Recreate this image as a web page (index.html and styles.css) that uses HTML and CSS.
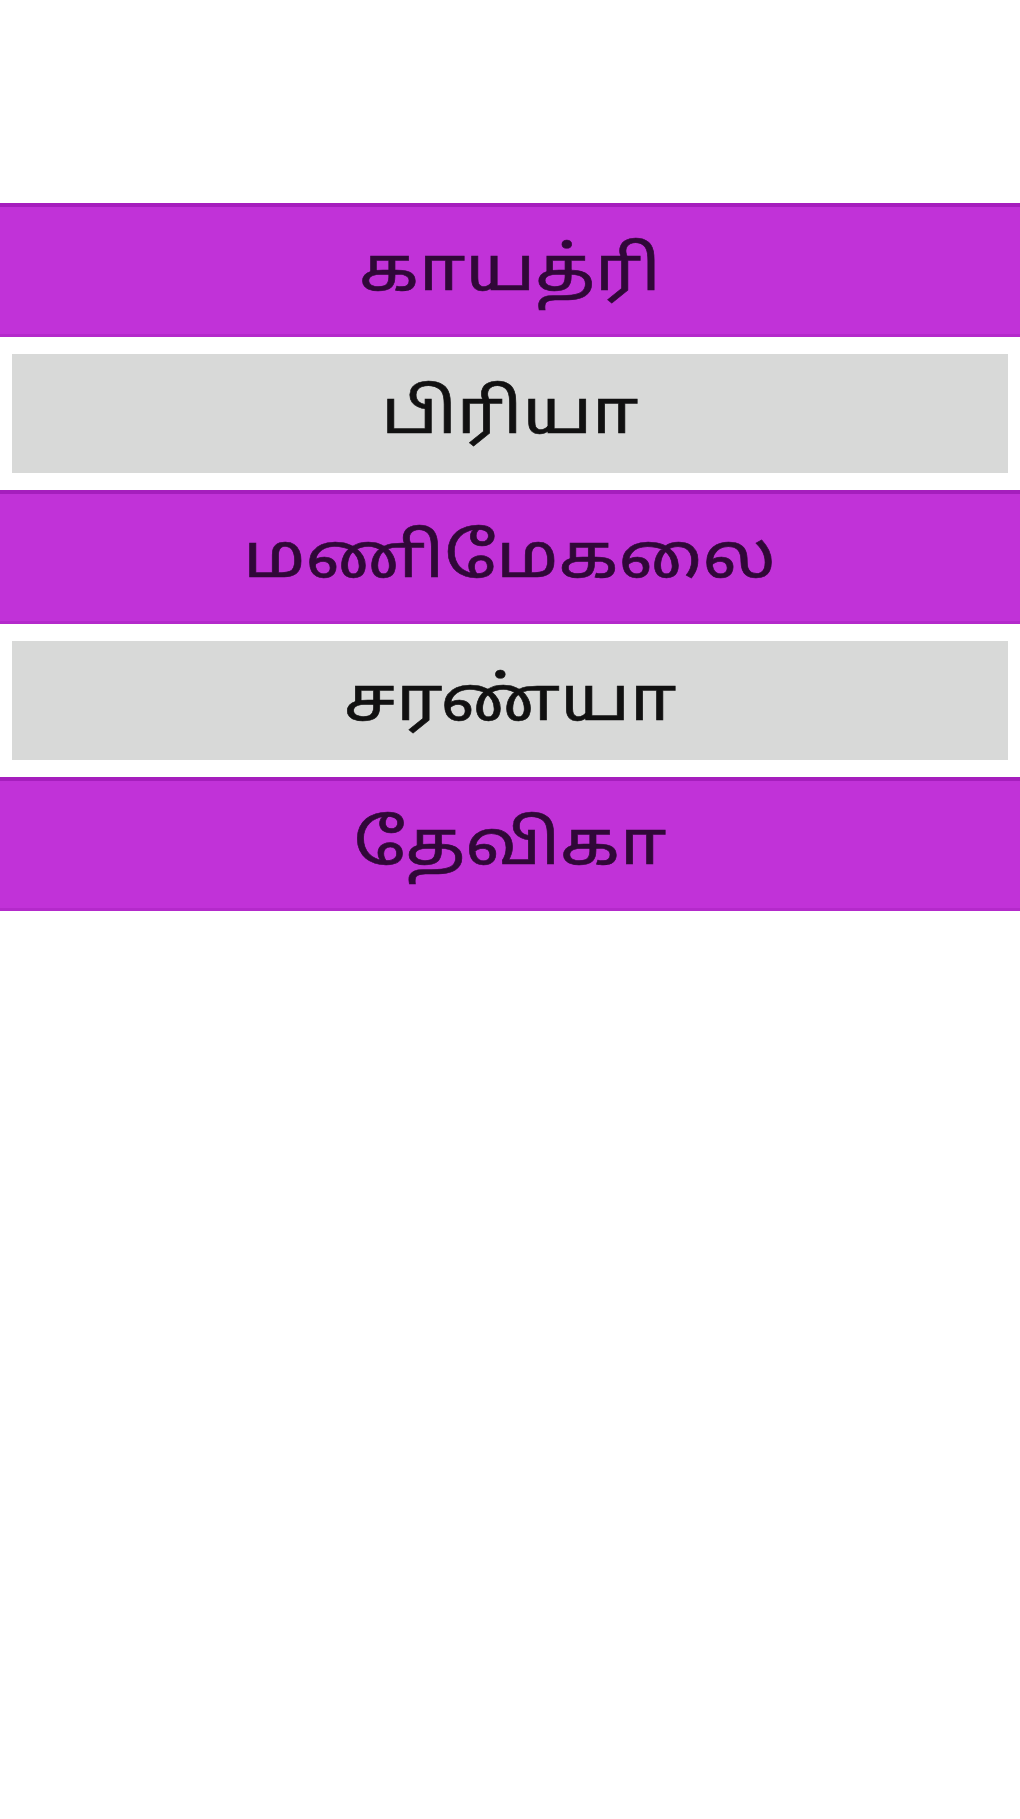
FILE: index.html
```html
<!DOCTYPE html>
<html lang="ta">
<head>
<meta charset="utf-8">
<title>Names</title>
<link rel="stylesheet" href="styles.css">
</head>
<body>
<ul class="list">
  <li class="item item-purple"><span class="label">காயத்ரி</span></li>
  <li class="item item-gray"><span class="label">பிரியா</span></li>
  <li class="item item-purple"><span class="label">மணிமேகலை</span></li>
  <li class="item item-gray"><span class="label">சரண்யா</span></li>
  <li class="item item-purple"><span class="label">தேவிகா</span></li>
</ul>
</body>
</html>
```
FILE: styles.css
```css
html, body {
  margin: 0;
  padding: 0;
  background: #ffffff;
}
body {
  width: 1020px;
  height: 1819px;
  font-family: "Noto Sans Tamil", "Lohit Tamil", "Noto Sans", "DejaVu Sans", sans-serif;
}
.list {
  list-style: none;
  margin: 0;
  padding: 203px 0 0 0;
  display: flex;
  flex-direction: column;
  gap: 17px;
}
.item {
  display: flex;
  align-items: center;
  justify-content: center;
  box-sizing: border-box;
  padding-top: 9px;
  font-size: 62px;
  line-height: 1;
  -webkit-text-stroke: 0.6px currentColor;
}
.label {
  display: inline-block;
  transform: scaleX(1.17);
}
.item-purple {
  height: 134px;
  background: #c132d8;
  border-top: 4px solid #a51ebd;
  border-bottom: 3px solid #b42acb;
  color: #300838;
}
.item-gray {
  height: 119px;
  margin: 0 12px;
  background: #d8d9d8;
  color: #111111;
}
```
